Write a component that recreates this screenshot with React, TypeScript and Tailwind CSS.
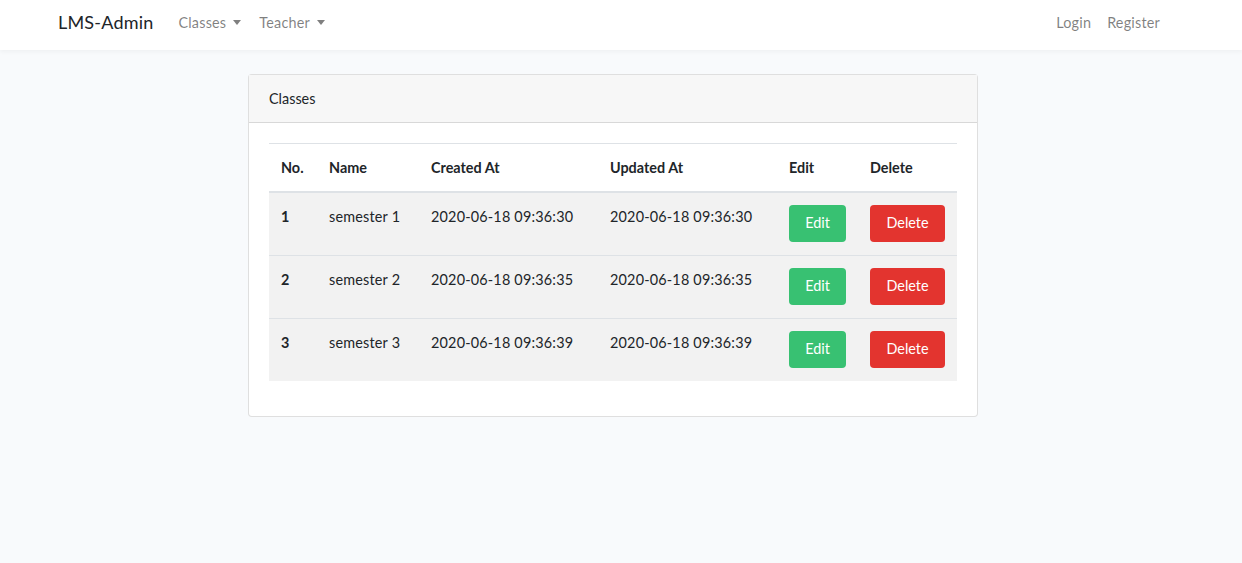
import React from "react";

const rows = [
  { no: 1, name: "semester 1", created: "2020-06-18 09:36:30", updated: "2020-06-18 09:36:30" },
  { no: 2, name: "semester 2", created: "2020-06-18 09:36:35", updated: "2020-06-18 09:36:35" },
  { no: 3, name: "semester 3", created: "2020-06-18 09:36:39", updated: "2020-06-18 09:36:39" },
];

function Caret() {
  return <span className="ml-[7px] inline-block h-0 w-0 border-x-[4.5px] border-t-[5px] border-x-transparent border-t-current align-middle" />;
}

export default function App() {
  return (
    <div className="min-h-[563px] bg-[#f8fafc] text-[14.4px] leading-[1.6] text-[#212529]" style={{ fontFamily: "Lato, 'Open Sans', sans-serif" }}>
      <nav className="flex h-[50px] items-center bg-white pb-[5px] pl-[58px] pr-[82px] shadow-[0_2px_4px_rgba(0,0,0,0.04)]">
        <span className="mr-[25px] text-[18px] tracking-[0.2px] text-[#212529]">LMS-Admin</span>
        <div className="flex items-center gap-[18px] tracking-[0.2px] text-[rgba(0,0,0,0.5)]">
          <span className="flex items-center">Classes<Caret /></span>
          <span className="flex items-center">Teacher<Caret /></span>
        </div>
        <div className="ml-auto flex items-center gap-[16px] tracking-[0.2px] text-[rgba(0,0,0,0.5)]">
          <span>Login</span>
          <span>Register</span>
        </div>
      </nav>

      <main className="pl-[248px] pt-[24px]">
        <div className="w-[730px] rounded-[4px] border border-[rgba(0,0,0,0.125)] bg-white">
          <div className="flex h-[48px] items-center border-b border-[rgba(0,0,0,0.125)] bg-[#f7f7f7] px-[20px]">
            Classes
          </div>
          <div className="p-[20px]">
            <table className="mb-[15px] w-full border-collapse text-left">
              <thead>
                <tr className="border-t border-[#dee2e6]">
                  <th className="h-[48px] w-[48px] border-b-2 border-[#dee2e6] px-[12px] font-bold">No.</th>
                  <th className="h-[48px] w-[102px] border-b-2 border-[#dee2e6] px-[12px] font-bold">Name</th>
                  <th className="h-[48px] w-[179px] border-b-2 border-[#dee2e6] px-[12px] font-bold">Created At</th>
                  <th className="h-[48px] w-[179px] border-b-2 border-[#dee2e6] px-[12px] font-bold">Updated At</th>
                  <th className="h-[48px] w-[81px] border-b-2 border-[#dee2e6] px-[12px] font-bold">Edit</th>
                  <th className="h-[48px] border-b-2 border-[#dee2e6] px-[12px] font-bold">Delete</th>
                </tr>
              </thead>
              <tbody>
                {rows.map((r) => (
                  <tr key={r.no} className="border-t border-[#dee2e6] bg-[#f2f2f2] align-top">
                    <th className="px-[12px] pb-[13px] pt-[12px] font-bold">{r.no}</th>
                    <td className="px-[12px] pb-[13px] pt-[12px] tracking-[0.2px]">{r.name}</td>
                    <td className="px-[12px] pb-[13px] pt-[12px] tracking-[0.2px]">{r.created}</td>
                    <td className="px-[12px] pb-[13px] pt-[12px] tracking-[0.2px]">{r.updated}</td>
                    <td className="px-[12px] pb-[13px] pt-[12px]">
                      <button className="h-[37px] w-[57px] rounded-[4px] bg-[#38c172] text-white">Edit</button>
                    </td>
                    <td className="px-[12px] pb-[13px] pt-[12px]">
                      <button className="h-[37px] w-[75px] rounded-[4px] bg-[#e3342f] text-white">Delete</button>
                    </td>
                  </tr>
                ))}
              </tbody>
            </table>
          </div>
        </div>
      </main>
    </div>
  );
}
